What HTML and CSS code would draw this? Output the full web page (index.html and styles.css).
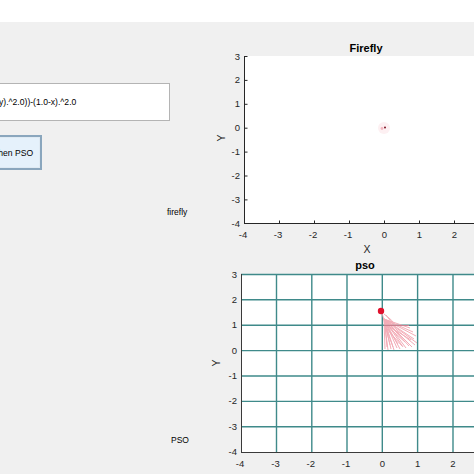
FILE: index.html
```html
<!DOCTYPE html>
<html>
<head>
<meta charset="utf-8">
<link rel="stylesheet" href="styles.css">
</head>
<body>
<div class="topbar"></div>
<div class="app">
  <div class="controls">
    <div class="expr">y).^2.0))-(1.0-x).^2.0</div>
    <div class="btn">then PSO</div>
    <div class="lbl lbl-firefly">firefly</div>
    <div class="lbl lbl-pso">PSO</div>
  </div>
  <svg class="figure" width="274" height="452" viewBox="200 22 274 452" xmlns="http://www.w3.org/2000/svg">
    <!-- Firefly axes -->
    <rect x="244" y="56" width="250" height="167" fill="#ffffff"/>
    <g class="axis" stroke="#262626" stroke-width="1" fill="none">
      <line x1="244.5" y1="56" x2="244.5" y2="223.5"/>
      <line x1="244" y1="223.5" x2="494" y2="223.5"/>
      <path d="M279.5 223v-2.5M314.5 223v-2.5M349.5 223v-2.5M384.5 223v-2.5M419.5 223v-2.5M454.5 223v-2.5"/>
      <path d="M245 56.5h2.5M245 80.4h2.5M245 104.3h2.5M245 128.2h2.5M245 152.1h2.5M245 176h2.5M245 199.9h2.5"/>
    </g>
    <g class="ticklbl" fill="#262626" font-family="Liberation Sans, Arial, sans-serif" font-size="9.5" text-anchor="end">
      <text x="240" y="59.5">3</text>
      <text x="240" y="83.4">2</text>
      <text x="240" y="107.3">1</text>
      <text x="240" y="131.2">0</text>
      <text x="240" y="155.1">-1</text>
      <text x="240" y="179">-2</text>
      <text x="240" y="202.9">-3</text>
      <text x="240" y="226.5">-4</text>
    </g>
    <g fill="#262626" font-family="Liberation Sans, Arial, sans-serif" font-size="9.5" text-anchor="middle">
      <text x="243" y="237.5">-4</text>
      <text x="278" y="237.5">-3</text>
      <text x="313" y="237.5">-2</text>
      <text x="348" y="237.5">-1</text>
      <text x="384.5" y="237.5">0</text>
      <text x="419.5" y="237.5">1</text>
      <text x="454.5" y="237.5">2</text>
    </g>
    <text x="366" y="51.5" fill="#000" font-family="Liberation Sans, Arial, sans-serif" font-size="11" font-weight="bold" text-anchor="middle">Firefly</text>
    <text x="367" y="252.5" fill="#262626" font-family="Liberation Sans, Arial, sans-serif" font-size="10.5" text-anchor="middle">X</text>
    <text transform="translate(224.5 138) rotate(-90)" fill="#262626" font-family="Liberation Sans, Arial, sans-serif" font-size="10.5" text-anchor="middle">Y</text>
    <circle cx="384" cy="128" r="6" fill="#fdf0f2"/>
    <circle cx="382" cy="128.5" r="1.4" fill="#f4b6c0"/>
    <circle cx="385" cy="127.5" r="1" fill="#7a1020"/>

    <!-- PSO axes -->
    <rect x="241" y="274" width="250" height="178" fill="#ffffff"/>
    <g stroke="#3f8a8a" stroke-width="1.4" fill="none">
      <path d="M276.5 274v178M311.8 274v178M347 274v178M382.3 274v178M417.6 274v178M453 274v178"/>
      <path d="M241 274.5h250M241 299.8h250M241 325.2h250M241 350.6h250M241 376h250M241 401.4h250M241 426.8h250"/>
    </g>
    <g stroke="#3a3a3a" stroke-width="1" fill="none">
      <line x1="241.5" y1="274" x2="241.5" y2="452.5"/>
      <line x1="241" y1="452.5" x2="491" y2="452.5"/>
    </g>
    <g fill="#262626" font-family="Liberation Sans, Arial, sans-serif" font-size="9.5" text-anchor="end">
      <text x="237" y="277.5">3</text>
      <text x="237" y="302.8">2</text>
      <text x="237" y="328.2">1</text>
      <text x="237" y="353.6">0</text>
      <text x="237" y="379">-1</text>
      <text x="237" y="404.4">-2</text>
      <text x="237" y="429.8">-3</text>
      <text x="237" y="455">-4</text>
    </g>
    <g fill="#262626" font-family="Liberation Sans, Arial, sans-serif" font-size="9.5" text-anchor="middle">
      <text x="240" y="466.5">-4</text>
      <text x="275.5" y="466.5">-3</text>
      <text x="310.8" y="466.5">-2</text>
      <text x="346" y="466.5">-1</text>
      <text x="382.3" y="466.5">0</text>
      <text x="417.6" y="466.5">1</text>
      <text x="453" y="466.5">2</text>
    </g>
    <text x="365" y="268.5" fill="#000" font-family="Liberation Sans, Arial, sans-serif" font-size="11" font-weight="bold" text-anchor="middle">pso</text>
    <text transform="translate(219.5 363) rotate(-90)" fill="#262626" font-family="Liberation Sans, Arial, sans-serif" font-size="10.5" text-anchor="middle">Y</text>
    <g stroke="#f2a4b0" stroke-width="1" fill="none" opacity="0.9">
      <path d="M384 319L385 349M384 319L388 350M384 319L391 349M384 319L394 350M384 319L397 348M384 319L400 349M384 319L403 347M384 319L406 348M384 319L409 346M384 319L412 347M384 319L415 345M384 319L417 343M384 319L414 339M384 319L416 336M384 319L413 332M384 319L410 328"/>
      <path d="M385 324L390 345M385 324L398 344M385 324L405 342M385 324L411 340M385 324L387 347M386 328L393 347M386 328L402 346"/>
      <path d="M382 313L384 320M386 315L392 323M384 314L389 318Q392 320 394 324"/>
      <path d="M384 325.5H409" stroke="#d98090"/>
    </g>
    <circle cx="381" cy="311" r="3.2" fill="#e0102c"/>
  </svg>
</div>
</body>
</html>
```

FILE: styles.css
```css
* {
  box-sizing: border-box;
}

html, body {
  margin: 0;
  padding: 0;
  width: 474px;
  height: 474px;
  overflow: hidden;
  background: #f0f0f0;
  font-family: "Liberation Sans", Arial, sans-serif;
}

.topbar {
  height: 22px;
  background: #ffffff;
}

.app {
  display: flex;
  height: 452px;
  background: #f0f0f0;
}

.controls {
  width: 200px;
  flex: none;
  display: flex;
  flex-direction: column;
  align-items: flex-start;
}

.expr {
  margin-top: 61px;
  margin-left: -3px;
  width: 173px;
  height: 38px;
  background: #ffffff;
  border: 1px solid #b4b4b4;
  font-size: 8.6px;
  color: #000;
  line-height: 36px;
  padding-left: 1px;
  white-space: nowrap;
  overflow: hidden;
}

.btn {
  margin-top: 14px;
  margin-left: -13px;
  width: 55px;
  height: 35px;
  background: #e5f1fb;
  border: 2px solid #8aa6bd;
  box-shadow: inset 0 0 0 1px #dfeaf3;
  font-size: 8.6px;
  color: #000;
  display: flex;
  align-items: center;
  justify-content: center;
  white-space: nowrap;
}

.lbl {
  font-size: 8.5px;
  color: #000;
  line-height: 10px;
}

.lbl-firefly {
  margin-top: 37px;
  margin-left: 167px;
}

.lbl-pso {
  margin-top: 218px;
  margin-left: 171px;
}

.figure {
  flex: none;
  display: block;
}
```
